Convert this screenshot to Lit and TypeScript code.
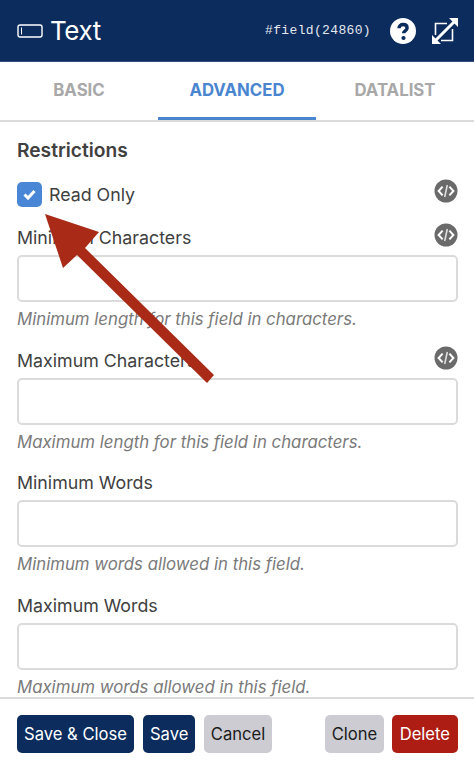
import { LitElement, html, css, svg } from "lit";
import { customElement } from "lit/decorators.js";

const codeIcon = svg`<svg class="code" viewBox="0 0 24 24" width="24" height="24" aria-hidden="true"><circle cx="12" cy="12" r="11.500" fill="#6a6a6a"/><path d="M8.600 7.600 4.600 12l4 4.400M15.400 7.600l4 4.400-4 4.400" fill="none" stroke="#fff" stroke-width="2"/><path d="M13.300 6 10.700 18" fill="none" stroke="#dedede" stroke-width="1.600"/></svg>`;

const fields = [
  { label: "Minimum Characters", help: "Minimum length for this field in characters.", code: true },
  { label: "Maximum Characters", help: "Maximum length for this field in characters.", code: true },
  { label: "Minimum Words", help: "Minimum words allowed in this field.", code: false },
  { label: "Maximum Words", help: "Maximum words allowed in this field.", code: false },
];

@customElement("app-root")
export class AppRoot extends LitElement {
  static styles = css`
    :host { display: block; width: 474px; height: 769px; font-family: Inter, "Noto Sans", sans-serif; color: #404040; background: #fff; overflow: hidden; position: relative; }
    .page { display: flex; flex-direction: column; height: 769px; }
    .header { height: 61px; flex: none; background: #0b2c5d; border-bottom: 1px solid #35507c; display: flex; align-items: center; color: #fff; padding: 0 16px 0 17px; }
    .title { font-size: 26px; margin-left: 7px; font-weight: 400; letter-spacing: -0.4px; flex: 1; line-height: 30px; }
    .id { font-family: "Liberation Mono", monospace; font-size: 13px; letter-spacing: 0.35px; color: #e4e8ef; margin-right: 19px; }
    .fs { margin-left: 16px; }
    .tabs { display: flex; flex: none; height: 60px; border-bottom: 2px solid #dbdbdb; box-sizing: border-box; }
    .tab { flex: 1; display: flex; align-items: center; justify-content: center; font-weight: 700; font-size: 16.800px; color: #a8a8a8; border-bottom: 3px solid transparent; }
    .tab.on { color: #4a86d0; border-bottom-color: #4a86d0; }
    .body { flex: 1; padding: 16px 16px 0 17px; overflow: hidden; min-height: 0; }
    h2 { margin: 0; font-size: 19.200px; line-height: 24px; font-weight: 600; color: #404040; }
    .row { display: flex; align-items: center; justify-content: space-between; }
    .ro { margin-top: 20px; height: 25px; }
    .ro .code { margin-bottom: 8px; }
    .ck { display: flex; align-items: center; gap: 7px; font-size: 17.800px; }
    .box { width: 25px; height: 25px; border-radius: 5px; background: #4a86d6; display: flex; align-items: center; justify-content: center; }
    .field { margin-bottom: 18.670px; }
    .first { margin-top: 18px; }
    .label { height: 30px; font-size: 17.800px; line-height: 26px; display: flex; justify-content: space-between; align-items: flex-start; }
    .label .code { margin-top: -2px; }
    .input { height: 47px; box-sizing: border-box; border: 2px solid #dbdbdb; border-radius: 5px; background: #fff; }
    .help { font-size: 16.800px; font-style: italic; color: #7a7a7a; line-height: 20px; margin-top: 7px; white-space: nowrap; }
    .footer { height: 72px; border-top: 2px solid #dbdbdb; display: flex; align-items: flex-start; justify-content: space-between; padding: 16px 16px 0 17px; background: #fff; box-sizing: border-box; flex: none; }
    .group { display: flex; gap: 9px; }
    .group.right { gap: 8px; }
    .btn { height: 38px; border-radius: 5px; display: flex; align-items: center; justify-content: center; font-size: 16.600px; padding: 0 7px; box-sizing: border-box; }
    .navy { background: #0b2c5d; color: #fff; }
    .gray { background: #ccccd2; color: #1b1b1b; padding: 0 6.500px; }
    .red { background: #ad1d14; color: #fff; padding: 0 8px; }
    .arrow { position: absolute; left: 0; top: 0; pointer-events: none; }
  `;

  render() {
    return html`
      <div class="page">
        <div class="header">
          <svg width="26" height="14" viewBox="0 0 26 14" aria-hidden="true"><rect x="1" y="1" width="24" height="12" rx="2" fill="none" stroke="#fff" stroke-width="1.400"/><path d="M4.500 3.500v7" stroke="#fff" stroke-width="1"/></svg>
          <div class="title">Text</div>
          <div class="id">#field(24860)</div>
          <svg width="26" height="26" viewBox="0 0 26 26" aria-hidden="true"><circle cx="13" cy="13" r="13" fill="#fff"/><path d="M9 10.200c0-2.400 1.800-3.700 4.100-3.700s4 1.300 4 3.400c0 2.900-3.500 2.800-3.500 5.300" fill="none" stroke="#0b2c5d" stroke-width="3.400"/><circle cx="13.500" cy="20" r="2.100" fill="#0b2c5d"/></svg>
          <svg class="fs" width="26" height="26" viewBox="0 0 26 26" aria-hidden="true"><path d="M15 5.500H3.500V17M9 22.500H20.500V11" fill="none" stroke="#fff" stroke-width="1.600"/><path d="M4 22 22 4" stroke="#fff" stroke-width="3" fill="none"/><path d="M17 0H26V9ZM0 17V26H9Z" fill="#fff"/></svg>
        </div>
        <div class="tabs">
          <div class="tab">BASIC</div>
          <div class="tab on">ADVANCED</div>
          <div class="tab">DATALIST</div>
        </div>
        <div class="body">
          <h2>Restrictions</h2>
          <div class="row ro">
            <div class="ck">
              <div class="box"><svg width="15" height="13" viewBox="0 0 15 13" aria-hidden="true"><path d="M2.500 6.500 6 10 12.500 3" fill="none" stroke="#fff" stroke-width="3"/></svg></div>
              Read Only
            </div>
            ${codeIcon}
          </div>
          ${fields.map(
            (f, i) => html`
              <div class="field ${i === 0 ? "first" : ""}">
                <div class="label"><span>${f.label}</span>${f.code ? codeIcon : ""}</div>
                <div class="input"></div>
                <div class="help">${f.help}</div>
              </div>
            `
          )}
        </div>
        <div class="footer">
          <div class="group">
            <div class="btn navy">Save &amp; Close</div>
            <div class="btn navy">Save</div>
            <div class="btn gray">Cancel</div>
          </div>
          <div class="group right">
            <div class="btn gray">Clone</div>
            <div class="btn red">Delete</div>
          </div>
        </div>
      </div>
      <svg class="arrow" width="474" height="769" viewBox="0 0 474 769" aria-hidden="true">
        <path d="M45 214 99 232 85 248 214 375 207 383 77 255 63 268Z" fill="#a92b17"/>
      </svg>
    `;
  }
}
